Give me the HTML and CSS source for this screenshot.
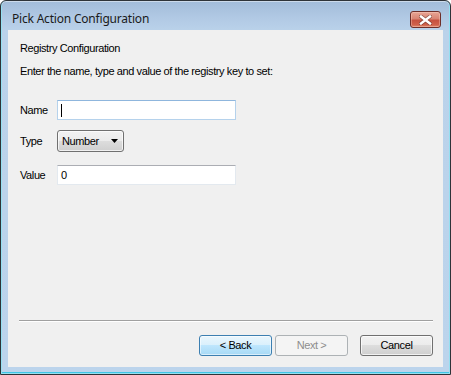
FILE: index.html
```html
<!DOCTYPE html>
<html>
<head>
<meta charset="utf-8">
<link rel="stylesheet" href="styles.css">
</head>
<body>
<div class="window">
  <div class="titlebar">
    <span class="title">Pick Action Configuration</span>
    <div class="close">
      <svg width="13" height="10" viewBox="0 0 13 10">
        <path d="M2 1.5 L11 8.5 M11 1.5 L2 8.5" stroke="#5a2a22" stroke-width="4" stroke-linecap="square" fill="none" opacity="0.55"/>
        <path d="M2 1.5 L11 8.5 M11 1.5 L2 8.5" stroke="#ffffff" stroke-width="2.4" stroke-linecap="square" fill="none"/>
      </svg>
    </div>
  </div>
  <div class="client">
    <div class="heading">Registry Configuration</div>
    <div class="intro">Enter the name, type and value of the registry key to set:</div>
    <div class="row row-name">
      <span class="label">Name</span>
      <div class="textbox focused"><span class="caret"></span></div>
    </div>
    <div class="row row-type">
      <span class="label">Type</span>
      <div class="combo">
        <span class="combo-text">Number</span>
        <svg class="combo-arrow" width="7" height="4" viewBox="0 0 7 4"><path d="M0 0 H7 L3.5 4 Z" fill="#000"/></svg>
      </div>
    </div>
    <div class="row row-value">
      <span class="label">Value</span>
      <div class="textbox"><span class="value-text">0</span></div>
    </div>
    <div class="spacer"></div>
    <div class="separator"></div>
    <div class="footer">
      <button class="btn btn-default">&lt; Back</button>
      <button class="btn btn-disabled">Next &gt;</button>
      <button class="btn btn-cancel">Cancel</button>
    </div>
  </div>
</div>
</body>
</html>
```

FILE: styles.css
```css
html, body {
  margin: 0;
  padding: 0;
  background: #ffffff;
}

.window {
  width: 451px;
  height: 375px;
  box-sizing: border-box;
  border: 1px solid #2e3338;
  border-radius: 6px 6px 0 0;
  background: linear-gradient(to bottom, #a2bcd9 0px, #b2cae5 18px, #bad2ea 30px, #bcd4ec 100%);
  box-shadow: inset 0 0 0 1px rgba(255,255,255,0.45), inset 0 -1px 0 1px #3fc6e6;
  display: flex;
  flex-direction: column;
  font-family: "Liberation Sans", Arial, sans-serif;
  font-size: 11px;
  letter-spacing: -0.4px;
  color: #000;
  overflow: hidden;
}

.titlebar {
  height: 29px;
  display: flex;
  align-items: flex-start;
  justify-content: space-between;
  padding: 0 9px 0 11px;
}

.title {
  font-family: "Noto Sans", "Open Sans", sans-serif;
  font-size: 12px;
  letter-spacing: -0.2px;
  color: #1a1a1a;
  margin-top: 10px;
  line-height: 16px;
}

.close {
  width: 29px;
  height: 15px;
  margin-top: 10px;
  border: 1px solid #6e2e29;
  border-radius: 3px;
  background: linear-gradient(to bottom, #e8a595 0%, #d98473 45%, #c6513f 55%, #d0604a 85%, #e08a6e 100%);
  box-shadow: inset 0 0 0 1px rgba(255,220,210,0.35);
  display: flex;
  align-items: center;
  justify-content: center;
}

.close svg {
  display: block;
}

.client {
  height: 337px;
  margin: 0 7px;
  background: #f0f0f0;
  display: flex;
  flex-direction: column;
  padding-left: 12px;
  box-sizing: border-box;
}

.heading {
  line-height: 13px;
  margin-top: 12px;
}

.intro {
  line-height: 13px;
  margin-top: 10px;
}

.row {
  display: flex;
  align-items: center;
}

.label {
  width: 37px;
  line-height: 13px;
}

.row-name {
  margin-top: 22px;
  height: 20px;
}

.row-type {
  margin-top: 10px;
  height: 22px;
}

.row-value {
  margin-top: 13px;
  height: 20px;
}

.textbox {
  width: 179px;
  height: 20px;
  box-sizing: border-box;
  background: #ffffff;
  border: 1px solid #e3e9ef;
  border-top-color: #abadb3;
  display: flex;
  align-items: center;
  padding-left: 3px;
}

.textbox.focused {
  border-color: #b5d2ec;
  border-top-color: #8fb6dd;
}

.caret {
  width: 1px;
  height: 13px;
  background: #000;
}

.value-text {
  line-height: 13px;
}

.combo {
  width: 67px;
  height: 22px;
  box-sizing: border-box;
  border: 1px solid #707070;
  border-radius: 3px;
  background: linear-gradient(to bottom, #f2f2f2 0%, #ebebeb 50%, #dddddd 50%, #cfcfcf 100%);
  box-shadow: inset 0 0 0 1px rgba(255,255,255,0.7);
  display: flex;
  align-items: center;
  justify-content: space-between;
  padding: 0 5px 0 4px;
}

.combo-text {
  line-height: 13px;
}

.combo-arrow {
  display: block;
}

.spacer {
  flex: 1;
}

.separator {
  height: 1px;
  background: #a0a0a0;
  border-bottom: 1px solid #ffffff;
  margin-left: -1px;
  margin-right: 10px;
}

.footer {
  display: flex;
  justify-content: flex-end;
  padding: 13px 10px 11px 0;
}

.btn {
  width: 73px;
  height: 21px;
  box-sizing: border-box;
  font-family: "Liberation Sans", Arial, sans-serif;
  font-size: 11px;
  letter-spacing: -0.4px;
  color: #000;
  border-radius: 3px;
  padding: 0;
  margin: 0;
  line-height: 13px;
}

.btn-default {
  border: 1px solid #3c7fb1;
  background: linear-gradient(to bottom, #eaf6fd 0%, #d9f0fc 50%, #bee6fd 50%, #a7d9f5 100%);
  box-shadow: inset 0 0 0 1px rgba(255,255,255,0.55);
}

.btn-disabled {
  margin-left: 3px;
  border: 1px solid #adb2b5;
  background: #f4f4f4;
  color: #8d8d8d;
}

.btn-cancel {
  margin-left: 12px;
  border: 1px solid #707070;
  background: linear-gradient(to bottom, #f2f2f2 0%, #ebebeb 50%, #dddddd 50%, #cfcfcf 100%);
  box-shadow: inset 0 0 0 1px rgba(255,255,255,0.7);
}
```
